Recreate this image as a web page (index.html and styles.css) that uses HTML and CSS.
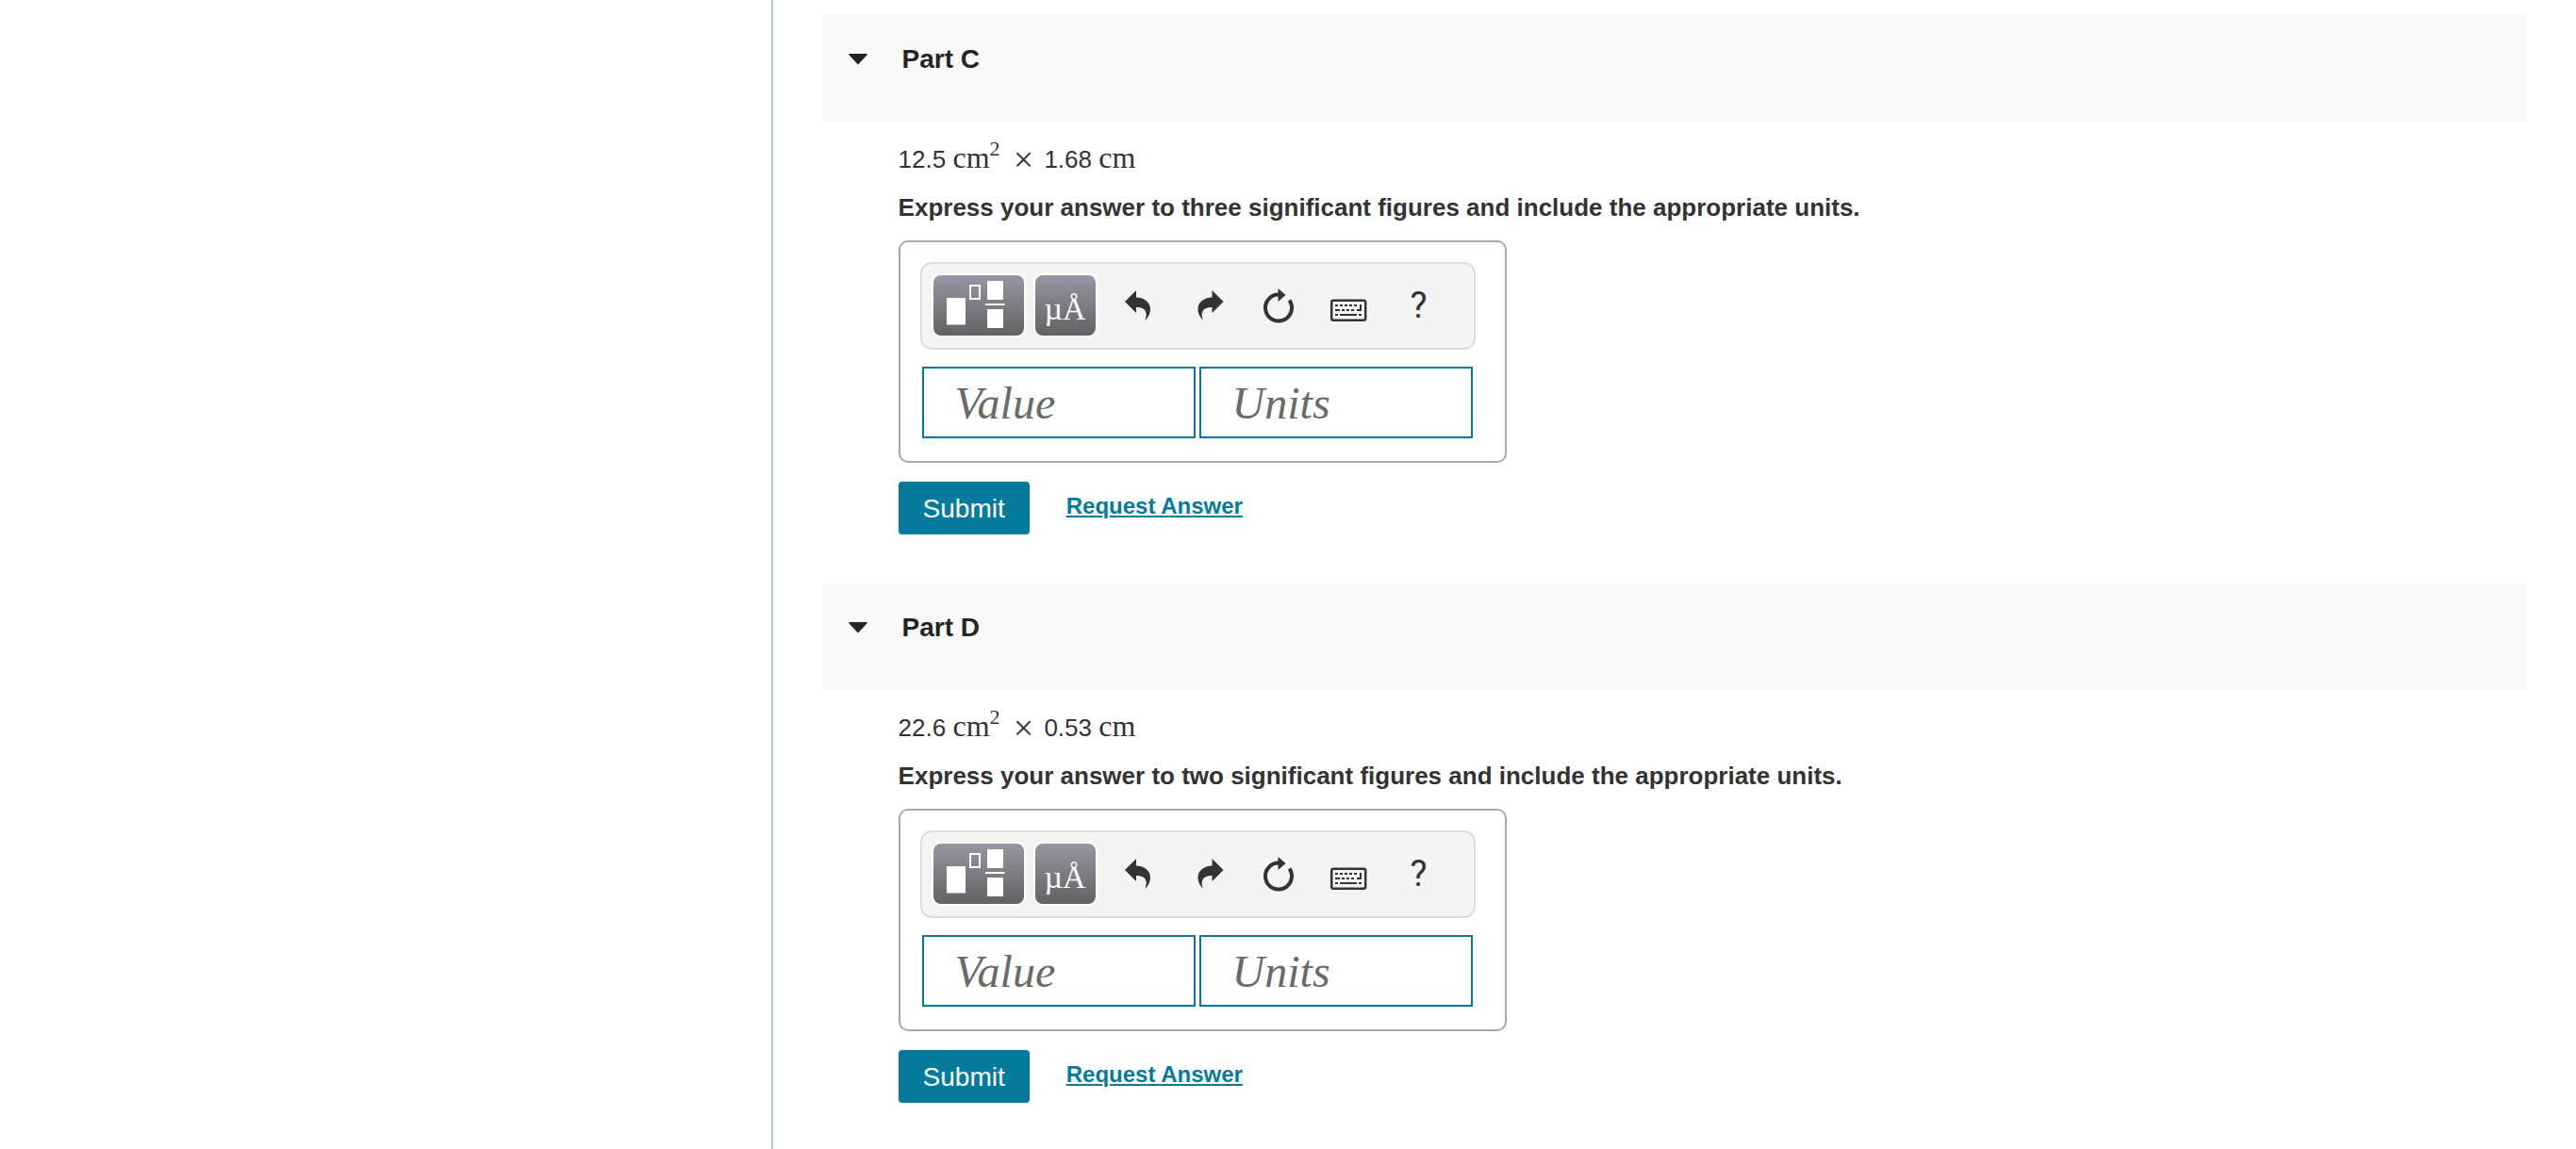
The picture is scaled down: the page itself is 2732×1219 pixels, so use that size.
FILE: index.html
```
<!DOCTYPE html>
<html lang="en">
    <head>
       <meta charset="utf-8">
       <title>Significant Figures</title>
       <link rel="stylesheet" href="styles.css">
    </head>
    <body>
       <!-- left pane -->
       <aside class="sidebar"></aside>
       <main class="content">
          <!-- part C -->
          <section class="part">
             <h2 class="part-header">
                <button class="toggle" type="button" aria-expanded="true">
                   <svg class="arrow" viewBox="0 0 20 12"><path d="M1.2 0H18.8Q20.6 0 19.4 1.6L11 10.6Q10 11.8 9 10.6L.6 1.6Q-.6 0 1.2 0Z"/></svg>
                   Part C
                </button>
             </h2>
             <div class="part-body">
                <p class="expression">12.5 <span class="unit">cm<sup>2</sup></span> <span class="times">×</span> 1.68 <span class="unit">cm</span></p>
                <p class="instruction">Express your answer to three significant figures and include the appropriate units.</p>
                <div class="answer">
                   <div class="toolbar">
                      <button class="template wide" type="button" aria-label="Templates">
                         <svg viewBox="0 0 96 64">
                            <path d="M14 24h20v28.500H14zM57 6h17v20H57zM55 30h20.500v2H55zM57 36h17v20H57z"/>
                            <path class="outline" d="M39 11h10v14H39z"/>
                         </svg>
                      </button>
                      <button class="template symbols" type="button">µÅ</button>
                      <div class="tools">
                         <button class="tool" type="button" aria-label="Undo"><svg viewBox="0 0 74 64"><path d="M19 28L31 16V23.500C40 24 46 28.500 46 36C46 41 43.500 45 40.500 48C43 41 42.500 34 31 34V40Z"/></svg></button>
                         <button class="tool" type="button" aria-label="Redo"><svg viewBox="0 0 74 64"><path d="M49.500 28L37.500 16V23.500C28.500 24 22.500 28.500 22.500 36C22.500 41 25 45 28 48C25.500 41 26 34 37.500 34V40Z"/></svg></button>
                         <button class="tool" type="button" aria-label="Reset"><svg viewBox="0 0 74 64"><path class="ring" d="M45.500 26.500A14 14 0 1 1 34 20.500"/><path d="M33.500 14L41.500 21L33.500 28Z"/></svg></button>
                         <button class="tool" type="button" aria-label="Keyboard"><svg viewBox="0 0 74 64"><rect class="case" x="16.200" y="26.700" width="36" height="21" rx="2"/><path d="M20 31h3v2h-3zM25 31h3v2h-3zM30 31h3v2h-3zM35 31h3v2h-3zM40 31h3v2h-3zM46 31h2v7h-5v-2h3zM20 36h5v2h-5zM27 36h3v2h-3zM32 36h3v2h-3zM37 36h3v2h-3zM20 41h3v2h-3zM25 41h18v2h-18zM45 41h3v2h-3z"/></svg></button>
                         <button class="tool help" type="button" aria-label="Help">?</button>
                      </div>
                   </div>
                   <div class="fields">
                      <input class="field" type="text" placeholder="Value" aria-label="Value">
                      <input class="field" type="text" placeholder="Units" aria-label="Units">
                   </div>
                </div>
                <div class="actions">
                   <button class="submit" type="button">Submit</button>
                   <a class="request" href="#">Request Answer</a>
                </div>
             </div>
          </section>
          <!-- part D -->
          <section class="part">
             <h2 class="part-header">
                <button class="toggle" type="button" aria-expanded="true">
                   <svg class="arrow" viewBox="0 0 20 12"><path d="M1.2 0H18.8Q20.6 0 19.4 1.6L11 10.6Q10 11.8 9 10.6L.6 1.6Q-.6 0 1.2 0Z"/></svg>
                   Part D
                </button>
             </h2>
             <div class="part-body">
                <p class="expression">22.6 <span class="unit">cm<sup>2</sup></span> <span class="times">×</span> 0.53 <span class="unit">cm</span></p>
                <p class="instruction">Express your answer to two significant figures and include the appropriate units.</p>
                <div class="answer">
                   <div class="toolbar">
                      <button class="template wide" type="button" aria-label="Templates">
                         <svg viewBox="0 0 96 64">
                            <path d="M14 24h20v28.500H14zM57 6h17v20H57zM55 30h20.500v2H55zM57 36h17v20H57z"/>
                            <path class="outline" d="M39 11h10v14H39z"/>
                         </svg>
                      </button>
                      <button class="template symbols" type="button">µÅ</button>
                      <div class="tools">
                         <button class="tool" type="button" aria-label="Undo"><svg viewBox="0 0 74 64"><path d="M19 28L31 16V23.500C40 24 46 28.500 46 36C46 41 43.500 45 40.500 48C43 41 42.500 34 31 34V40Z"/></svg></button>
                         <button class="tool" type="button" aria-label="Redo"><svg viewBox="0 0 74 64"><path d="M49.500 28L37.500 16V23.500C28.500 24 22.500 28.500 22.500 36C22.500 41 25 45 28 48C25.500 41 26 34 37.500 34V40Z"/></svg></button>
                         <button class="tool" type="button" aria-label="Reset"><svg viewBox="0 0 74 64"><path class="ring" d="M45.500 26.500A14 14 0 1 1 34 20.500"/><path d="M33.500 14L41.500 21L33.500 28Z"/></svg></button>
                         <button class="tool" type="button" aria-label="Keyboard"><svg viewBox="0 0 74 64"><rect class="case" x="16.200" y="26.700" width="36" height="21" rx="2"/><path d="M20 31h3v2h-3zM25 31h3v2h-3zM30 31h3v2h-3zM35 31h3v2h-3zM40 31h3v2h-3zM46 31h2v7h-5v-2h3zM20 36h5v2h-5zM27 36h3v2h-3zM32 36h3v2h-3zM37 36h3v2h-3zM20 41h3v2h-3zM25 41h18v2h-18zM45 41h3v2h-3z"/></svg></button>
                         <button class="tool help" type="button" aria-label="Help">?</button>
                      </div>
                   </div>
                   <div class="fields">
                      <input class="field" type="text" placeholder="Value" aria-label="Value">
                      <input class="field" type="text" placeholder="Units" aria-label="Units">
                   </div>
                </div>
                <div class="actions">
                   <button class="submit" type="button">Submit</button>
                   <a class="request" href="#">Request Answer</a>
                </div>
             </div>
          </section>
       </main>
    </body>
</html>
```

FILE: styles.css
```
*
{
   margin: 0;
   padding: 0;
   box-sizing: border-box;
}
body
{
   display: flex;
   min-height: 100vh;
   background-color: #fff;
   color: #333;
   font-family: "Liberation Sans", Arial, sans-serif;
   font-size: 26px;
}
button
{
   border: none;
   background: none;
   font-family: inherit;
   cursor: pointer;
}
svg
{
   display: block;
}
.sidebar
{
   width: 30%;
   border-right: 2px solid #b8cbdf;
}
.content
{
   flex: 1;
   padding: 16px 52px 0;
}
.part
{
   padding-bottom: 52px;
}
.part:last-child
{
   padding-bottom: 0;
}
/* grey bar with the part name */
.part-header
{
   padding: 31px 28px 50px;
   background-color: #f9f9f9;
}
.toggle
{
   display: flex;
   align-items: center;
   gap: 37px;
   color: #252525;
   font-size: 28px;
   font-weight: bold;
   line-height: 32px;
}
.arrow
{
   width: 20px;
   height: 12px;
   fill: #252525;
}
.part-body
{
   padding: 14px 81px 0;
}
.expression
{
   line-height: 52px;
}
.unit
{
   font-family: "Liberation Serif", "Times New Roman", serif;
   font-size: 32px;
   line-height: 0;
}
.unit sup
{
   font-size: 22px;
   vertical-align: 13px;
}
.times
{
   padding: 0 4px 0 7px;
   font-family: "Liberation Serif", "Times New Roman", serif;
   font-size: 38px;
   line-height: 0;
   vertical-align: -4px;
}
.instruction
{
   font-weight: bold;
   line-height: 50px;
}
/* answer box */
.answer
{
   width: 645px;
   max-width: 100%;
   margin-top: 10px;
   padding: 21px 31px 24px 21px;
   border: 2px solid #a9a9a9;
   border-radius: 10px;
}
.toolbar
{
   display: flex;
   gap: 12px;
   padding: 12px 12px 13px;
   border: 2px solid #ddd;
   border-radius: 12px;
   background-color: #f4f4f4;
}
.template
{
   width: 64px;
   height: 64px;
   border-radius: 8px;
   box-shadow: 0 0 0 2px #fff;
   background: linear-gradient(#9896a4, #626262);
   color: #fff;
   fill: #fff;
}
.wide
{
   width: 96px;
}
.symbols
{
   padding-top: 8px;
   font-family: "Liberation Serif", "Times New Roman", serif;
   font-size: 34px;
}
.outline
{
   fill: none;
   stroke: #fff;
   stroke-width: 2;
}
.tools
{
   display: flex;
}
.tool
{
   width: 74px;
   height: 64px;
   color: #333;
   fill: #333;
}
.ring
{
   fill: none;
   stroke: #333;
   stroke-width: 4;
}
.case
{
   fill: none;
   stroke: #333;
   stroke-width: 2.5;
}
.help
{
   padding-right: 4px;
   font-family: Roboto, sans-serif;
   font-size: 38px;
}
.fields
{
   display: flex;
   gap: 4px;
   margin-top: 18px;
   padding: 0 3px 0 2px;
}
.field
{
   flex: 1;
   min-width: 0;
   height: 76px;
   padding: 0 33px;
   border: 2px solid #047a9c;
   background-color: #fff;
   color: #333;
   font-family: "Liberation Serif", "Times New Roman", serif;
   font-size: 48px;
}
.field::placeholder
{
   color: #6a6a6a;
   font-style: italic;
}
/* submit row */
.actions
{
   display: flex;
   align-items: center;
   gap: 39px;
   margin-top: 20px;
}
.submit
{
   padding: 2px 26px 0;
   border-radius: 4px;
   background-color: #047a9c;
   color: #fff;
   font-size: 28px;
   line-height: 54px;
}
.request
{
   padding-bottom: 4px;
   color: #047a9c;
   font-size: 24px;
   font-weight: bold;
}
```
